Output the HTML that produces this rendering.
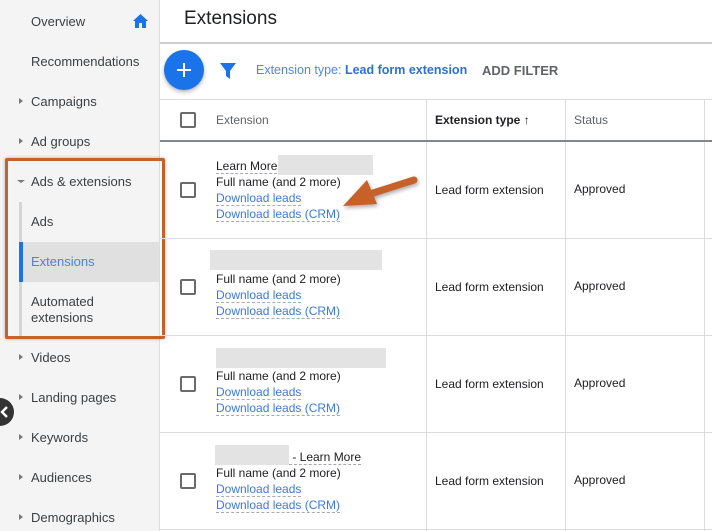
<!DOCTYPE html>
<html><head><style>
*{box-sizing:border-box;margin:0;padding:0}
body{width:712px;height:531px;overflow:hidden;font-family:"Liberation Sans",Arial,sans-serif;background:#fff;position:relative;color:#202124}
.abs{position:absolute}
#side{left:0;top:0;width:160px;height:531px;background:#f4f4f4;border-right:1px solid #dadce0}
.si{position:absolute;left:31px;font-size:13px;color:#3c4043;white-space:nowrap}
.tri{position:absolute;left:19px;width:0;height:0;border-top:3px solid transparent;border-bottom:3px solid transparent;border-left:4px solid #777}
.cb{position:absolute;width:16px;height:16px;border:2px solid #6b6b6b;border-radius:2px}
.t{position:absolute;font-size:12px;white-space:nowrap;line-height:14px}
.lk{color:#3b78e7;border-bottom:1px dashed #aaa}
.bl{position:absolute;background:#e3e3e3;height:20px}
.hl{position:absolute;left:160px;right:0;height:1px;background:#dadce0}
.vl{position:absolute;width:1px;background:#dadce0;top:100px;bottom:0}
</style></head><body>
<div id="side" class="abs">
  <div class="abs" style="left:19px;top:202px;width:3px;height:136px;background:#d5d5d5"></div>
  <div class="abs" style="left:19px;top:242px;width:140px;height:40px;background:#e0e0e0"></div>
  <div class="abs" style="left:19px;top:242px;width:4px;height:40px;background:#1a73e8"></div>
  <div class="si" style="top:14px">Overview</div>
  <svg class="abs" style="left:133px;top:14px" width="15" height="14" viewBox="0 0 15 14"><path d="M7.5 0L0 7h2v7h4v-5h3v5h4V7h2z" fill="#1a73e8"/></svg>
  <div class="si" style="top:54px">Recommendations</div>
  <div class="tri" style="top:98px"></div><div class="si" style="top:94px">Campaigns</div>
  <div class="tri" style="top:138px"></div><div class="si" style="top:134px">Ad groups</div>
  <div class="abs" style="left:17px;top:180px;border-left:4px solid transparent;border-right:4px solid transparent;border-top:3px solid #777"></div>
  <div class="si" style="top:174px">Ads &amp; extensions</div>
  <div class="si" style="top:214px">Ads</div>
  <div class="si" style="top:254px;color:#4f7fe0">Extensions</div>
  <div class="si" style="top:294px;line-height:16px">Automated<br>extensions</div>
  <div class="tri" style="top:354px"></div><div class="si" style="top:350px">Videos</div>
  <div class="tri" style="top:394px"></div><div class="si" style="top:390px">Landing pages</div>
  <div class="tri" style="top:434px"></div><div class="si" style="top:430px">Keywords</div>
  <div class="tri" style="top:474px"></div><div class="si" style="top:470px">Audiences</div>
  <div class="tri" style="top:514px"></div><div class="si" style="top:510px">Demographics</div>
</div>
<div class="abs" style="left:5px;top:158px;width:160px;height:181px;border:3px solid #c8602a;border-radius:2px;box-shadow:0 0 3px rgba(0,0,0,.3)"></div>
<div class="abs" style="left:-14px;top:398px;width:28px;height:28px;border-radius:50%;background:#333"></div>
<svg class="abs" style="left:0;top:405px" width="10" height="14"><path d="M7 2L2 7l5 5" stroke="#fff" stroke-width="2.4" fill="none"/></svg>

<div class="abs" style="left:184px;top:8px;font-size:19px;color:#202124">Extensions</div>
<div class="abs" style="left:160px;top:42px;right:0;height:2px;background:#cfcfcf"></div>
<div class="abs" style="left:164px;top:50px;width:40px;height:40px;border-radius:50%;background:#1a73e8;box-shadow:0 2px 4px rgba(0,0,0,.3)"></div>
<svg class="abs" style="left:176px;top:62px" width="16" height="16"><path d="M8 1v14M1 8h14" stroke="#fff" stroke-width="2"/></svg>
<svg class="abs" style="left:220px;top:63px" width="16" height="16" viewBox="0 0 16 16"><path d="M0 0h16l-6 8v8l-4-3V8z" fill="#1a73e8"/></svg>
<div class="abs" style="left:256px;top:63px;font-size:12.5px;color:#4f87e8">Extension type: <b style="color:#2f6fd8">Lead form extension</b></div>
<div class="abs" style="left:482px;top:63px;font-size:13px;color:#5f6368;font-weight:bold">ADD FILTER</div>
<div class="hl" style="top:99px"></div>
<div class="vl" style="left:426px"></div><div class="vl" style="left:565px"></div><div class="vl" style="left:704px"></div>
<div class="cb" style="left:180px;top:112px"></div>
<div class="t" style="left:216px;top:113px;color:#5f6368">Extension</div>
<div class="t" style="left:435px;top:113px;font-weight:bold;color:#202124">Extension type <span style="font-weight:normal">&#8593;</span></div>
<div class="t" style="left:574px;top:113px;color:#5f6368">Status</div>
<div class="abs" style="left:160px;top:140px;right:0;height:2px;background:#80868b"></div>
<div class="hl" style="top:238px"></div><div class="hl" style="top:335px"></div><div class="hl" style="top:432px"></div><div class="hl" style="top:529px"></div>

<!-- row1 -->
<div class="cb" style="left:180px;top:182px"></div>
<div class="bl" style="left:278px;top:155px;width:95px"></div>
<div class="t" style="left:216px;top:159px;border-bottom:1px dashed #aaa">Learn More</div>
<div class="t" style="left:216px;top:175px">Full name (and 2 more)</div>
<div class="t lk" style="left:216px;top:191px">Download leads</div>
<div class="t lk" style="left:216px;top:207px">Download leads (CRM)</div>
<div class="t" style="left:435px;top:183px">Lead form extension</div>
<div class="t" style="left:574px;top:182px">Approved</div>
<!-- row2 -->
<div class="cb" style="left:180px;top:279px"></div>
<div class="bl" style="left:210px;top:250px;width:172px"></div>
<div class="t" style="left:216px;top:272px">Full name (and 2 more)</div>
<div class="t lk" style="left:216px;top:288px">Download leads</div>
<div class="t lk" style="left:216px;top:304px">Download leads (CRM)</div>
<div class="t" style="left:435px;top:280px">Lead form extension</div>
<div class="t" style="left:574px;top:279px">Approved</div>
<!-- row3 -->
<div class="cb" style="left:180px;top:376px"></div>
<div class="bl" style="left:216px;top:348px;width:170px"></div>
<div class="t" style="left:216px;top:369px">Full name (and 2 more)</div>
<div class="t lk" style="left:216px;top:385px">Download leads</div>
<div class="t lk" style="left:216px;top:401px">Download leads (CRM)</div>
<div class="t" style="left:435px;top:377px">Lead form extension</div>
<div class="t" style="left:574px;top:376px">Approved</div>
<!-- row4 -->
<div class="cb" style="left:180px;top:473px"></div>
<div class="bl" style="left:215px;top:445px;width:74px"></div>
<div class="t" style="left:289px;top:450px;border-bottom:1px dashed #aaa">&nbsp;- Learn More</div>
<div class="t" style="left:216px;top:466px">Full name (and 2 more)</div>
<div class="t lk" style="left:216px;top:482px">Download leads</div>
<div class="t lk" style="left:216px;top:498px">Download leads (CRM)</div>
<div class="t" style="left:435px;top:474px">Lead form extension</div>
<div class="t" style="left:574px;top:473px">Approved</div>

<svg class="abs" style="left:340px;top:170px;filter:drop-shadow(1px 2px 2px rgba(0,0,0,.35))" width="80" height="42"><path d="M74 10L30 24" stroke="#c8602a" stroke-width="7" stroke-linecap="round"/><path d="M3 36L27 10L37 34Z" fill="#c8602a"/></svg>
</body></html>
